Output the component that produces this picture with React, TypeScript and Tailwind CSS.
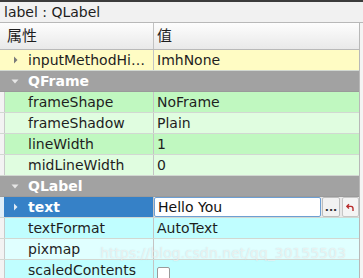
import React from "react";

type Row =
  | { kind: "group"; name: string }
  | { kind: "prop"; name: string; value?: string; bg: string; strip?: boolean; arrow?: boolean; check?: boolean };

const ROWS: Row[] = [
  { kind: "prop", name: "inputMethodHi…", value: "ImhNone", bg: "bg-[#fffcc4]", arrow: true },
  { kind: "group", name: "QFrame" },
  { kind: "prop", name: "frameShape", value: "NoFrame", bg: "bg-[#c0f8c0]", strip: true },
  { kind: "prop", name: "frameShadow", value: "Plain", bg: "bg-[#e0fde0]", strip: true },
  { kind: "prop", name: "lineWidth", value: "1", bg: "bg-[#c0f8c0]", strip: true },
  { kind: "prop", name: "midLineWidth", value: "0", bg: "bg-[#e0fde0]", strip: true },
  { kind: "group", name: "QLabel" },
];

const ROWS_AFTER: Row[] = [
  { kind: "prop", name: "textFormat", value: "AutoText", bg: "bg-[#c0feff]", strip: true },
  { kind: "prop", name: "pixmap", value: "", bg: "bg-[#e0ffff]", strip: true },
  { kind: "prop", name: "scaledContents", bg: "bg-[#c0feff]", strip: true, check: true },
];

const font = { fontFamily: '"DejaVu Sans", "Noto Sans CJK SC", sans-serif' };

const Closed = ({ color }: { color: string }) => (
  <svg width="5" height="8" viewBox="0 0 5 8" className="shrink-0">
    <path d="M1 0.5 L4.5 4 L1 7.5 Z" fill={color} />
  </svg>
);

const Open = () => (
  <svg width="8" height="5" viewBox="0 0 8 5" className="shrink-0">
    <path d="M0.5 0.5 L7.5 0.5 L4 4.5 Z" fill="#e6e6e6" />
  </svg>
);

const PropRow = ({ row }: { row: Row }) => {
  if (row.kind === "group") {
    return (
      <div className="flex shrink-0 h-[21px] items-center bg-[#a2a2a2] border-b border-[#9a9a9a]">
        <div className="w-[28px] pl-[11px] flex items-center">
          <Open />
        </div>
        <span className="text-white font-bold text-[14px]">{row.name}</span>
      </div>
    );
  }
  return (
    <div className={`flex shrink-0 h-[21px] ${row.bg} border-b border-[#d2d8d2]`}>
      {row.strip && <div className="w-[5px] bg-[#f3f3f3] border-r border-[#c9c9c9]" />}
      <div
        className={`${row.strip ? "w-[149px]" : "w-[154px]"} flex items-center border-r border-[#c4c4c4] text-[14px] text-[#1e1e1e]`}
      >
        <div className={`${row.strip ? "w-[23px] pl-[8px]" : "w-[28px] pl-[13px]"} flex items-center`}>
          {row.arrow && <Closed color="#7a7a7a" />}
        </div>
        <span className="whitespace-nowrap">{row.name}</span>
      </div>
      <div className="flex-1 flex items-center pl-[3px] text-[14px] text-[#1e1e1e]">
        {row.check ? (
          <div className="w-[13px] h-[13px] mt-[6px] bg-white border border-[#9a9a9a] rounded-[2px]" />
        ) : (
          <span>{row.value}</span>
        )}
      </div>
    </div>
  );
};

const App = () => {
  return (
    <div className="relative w-[363px] h-[278px] overflow-hidden bg-[#f4f4f4] flex flex-col" style={font}>
      <div className="h-[2px] shrink-0 bg-[#3c3c3c]" />
      <div className="h-[21px] shrink-0 flex items-center pl-[4px] bg-[#f1f1f1] border-b border-[#b8b8b8] text-[14px] text-[#1e1e1e]">
        label : QLabel
      </div>

      <div className="flex shrink-0">
        <div className="w-[360px] border-r border-[#b8b8b8] flex flex-col">
          {/* header */}
          <div className="flex shrink-0 h-[27px] bg-gradient-to-b from-[#fdfdfd] to-[#e9e9e9] border-b border-[#b9b9b9] text-[15px] text-[#1e1e1e]">
            <div className="w-[154px] flex items-center pl-[7px] border-r border-[#c2c2c2]">属性</div>
            <div className="flex-1 flex items-center pl-[3px]">值</div>
          </div>

          {ROWS.map((r, i) => (
            <PropRow key={i} row={r} />
          ))}

          {/* selected "text" row with editor */}
          <div className="flex shrink-0 h-[21px] bg-[#c0feff] border-b border-[#d2d8d2]">
            <div className="w-[4px] bg-[#dfeef8]" />
            <div className="w-[150px] flex items-center bg-[#3681c7] border-r border-[#c4c4c4]">
              <div className="w-[24px] pl-[9px] flex items-center">
                <Closed color="#dfe9f4" />
              </div>
              <span className="text-white font-bold text-[14px]">text</span>
            </div>
            <div className="flex-1 flex items-stretch gap-[1px] bg-[#e9e9e9]">
              <div className="w-[167px] flex items-center pl-[3px] bg-white border border-[#6d9fd3] rounded-[2px] text-[14px] text-[#111]">
                Hello You
              </div>
              <div className="w-[18px] flex items-end justify-center pb-[3px] bg-[#f2f2f2] border border-[#bdbdbd] rounded-[2px] text-[11px] font-bold text-[#333] leading-none">
                ...
              </div>
              <div className="w-[17px] ml-[1px] flex items-center justify-center bg-[#f4f4f4] border border-[#c6c6c6] rounded-[2px]">
                <svg width="9" height="9" viewBox="0 0 9 9">
                  <path d="M3 1.2 L0.8 3.4 L3 5.6" fill="none" stroke="#b82b2b" strokeWidth="1.4" />
                  <path d="M1 3.4 H5 Q7 3.4 7 5.6 V8" fill="none" stroke="#b82b2b" strokeWidth="1.4" />
                </svg>
              </div>
            </div>
          </div>

          {ROWS_AFTER.map((r, i) => (
            <PropRow key={`a${i}`} row={r} />
          ))}
        </div>
        <div className="flex-1 bg-[#f4f4f4]" />
      </div>

      {/* watermark */}
      <div className="absolute left-[100px] top-[243px] text-[14px] text-white/60 whitespace-nowrap pointer-events-none [text-shadow:0_0_1px_rgba(140,140,140,0.35)]">
        https://blog.csdn.net/qq_30155503
      </div>
    </div>
  );
};

export default App;
